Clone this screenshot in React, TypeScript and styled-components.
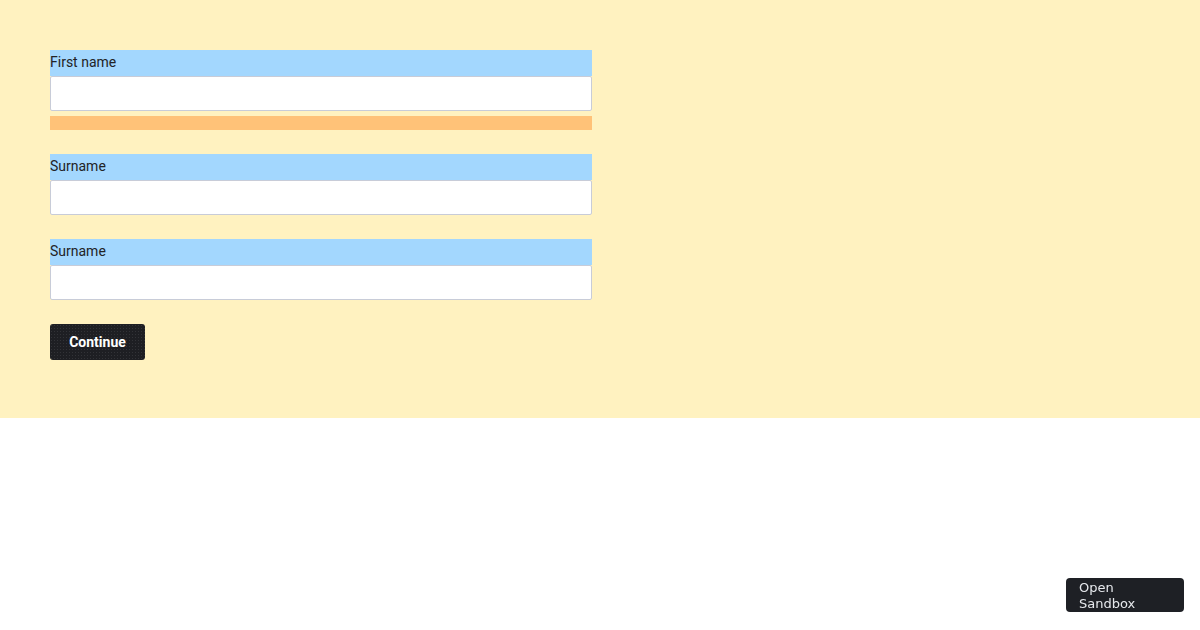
import React from 'react';
import styled, { createGlobalStyle } from 'styled-components';

const GlobalStyle = createGlobalStyle`
	* { box-sizing: border-box; }
	body {
		margin: 0;
		background: #ffffff;
		font-family: Roboto, 'Liberation Sans', sans-serif;
	}
`;

const Panel = styled.div`
	background: #fff2c0;
	padding: 50px 50px 58px;
`;

const Form = styled.form`
	width: 542px;
	display: flex;
	flex-direction: column;
	gap: 24px;
	margin: 0;
`;

const Field = styled.div`
	display: flex;
	flex-direction: column;
`;

const Label = styled.label`
	display: block;
	height: 26px;
	line-height: 24px;
	background: #a3d7fe;
	color: #222326;
	font-size: 14px;
	font-weight: 400;
`;

const Input = styled.input`
	display: block;
	width: 100%;
	height: 35px;
	margin: 0;
	padding: 0 10px;
	border: 1px solid #c8ccd8;
	border-radius: 2px;
	background: #ffffff;
	font-family: inherit;
	font-size: 14px;
	outline: none;
`;

const ErrorSlot = styled.div`
	height: 14px;
	margin-top: 5px;
	background: #ffc278;
`;

const Button = styled.button`
	align-self: flex-start;
	width: 95px;
	height: 36px;
	border: none;
	border-radius: 3px;
	background-color: #1e1f23;
	background-image: radial-gradient(rgba(255, 255, 255, 0.09) 0.6px, transparent 0.8px);
	background-size: 3px 3px;
	color: #ffffff;
	font-family: Roboto, 'Liberation Sans', sans-serif;
	font-size: 14px;
	font-weight: 700;
	cursor: pointer;
`;

const SandboxLink = styled.a`
	position: fixed;
	right: 16px;
	bottom: 18px;
	width: 118px;
	padding: 2px 40px 0 13px;
	border-radius: 4px;
	background: #1e2025;
	color: #e6e8ec;
	font-family: 'DejaVu Sans', sans-serif;
	font-size: 13px;
	line-height: 16px;
	text-decoration: none;
`;

type TextFieldProps = { id: string; label: string; withError?: boolean };

const TextField = ({ id, label, withError }: TextFieldProps) => (
	<Field>
		<Label htmlFor={id}>{label}</Label>
		<Input id={id} type='text' />
		{withError && <ErrorSlot />}
	</Field>
);

export default function App() {
	return (
		<>
			<GlobalStyle />
			<Panel>
				<Form onSubmit={e => e.preventDefault()}>
					<TextField id='firstName' label='First name' withError />
					<TextField id='surname' label='Surname' />
					<TextField id='surname2' label='Surname' />
					<Button type='submit'>Continue</Button>
				</Form>
			</Panel>
			<SandboxLink href='#'>Open Sandbox</SandboxLink>
		</>
	);
}
